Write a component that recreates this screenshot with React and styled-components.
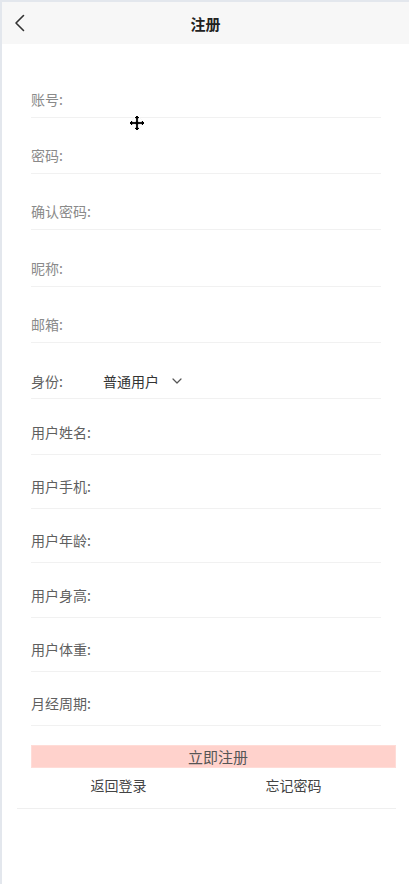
import styled, { createGlobalStyle } from "styled-components";

const GlobalStyle = createGlobalStyle`
  body {
    margin: 0;
    background: #ffffff;
    font-family: "Noto Sans CJK SC", "Noto Sans", "Liberation Sans", sans-serif;
  }
  * {
    box-sizing: border-box;
  }
`;

const Page = styled.div`
  position: relative;
  min-height: 884px;
  border-left: 2px solid #e3e7ed;
  border-top: 2px solid #e3e7ed;
  background: #ffffff;
`;

const Header = styled.header`
  display: grid;
  grid-template-columns: 1fr auto 1fr;
  align-items: center;
  height: 42px;
  background: #f7f7f7;
`;

const BackButton = styled.button`
  justify-self: start;
  display: flex;
  align-items: center;
  margin-left: 12px;
  padding: 0;
  border: none;
  background: transparent;
  cursor: pointer;
`;

const Title = styled.h1`
  margin: 0;
  font-size: 15px;
  font-weight: 700;
  color: #222;
`;

const Form = styled.form`
  display: flex;
  flex-direction: column;
  padding: 18px 0 0 29px;
`;

const Row = styled.label`
  display: flex;
  align-items: flex-end;
  width: 350px;
  height: ${(p) => p.$h}px;
  padding-bottom: ${(p) => p.$pb}px;
  border-bottom: 1px solid #f1f1f1;
`;

const RowLabel = styled.span`
  min-width: ${(p) => (p.$wide ? "72px" : "auto")};
  font-size: 14px;
  line-height: 16px;
  color: ${(p) => (p.$muted ? "#8a8a8a" : "#5f5f5f")};
`;

const SelectValue = styled.span`
  display: flex;
  align-items: center;
  gap: 13px;
  font-size: 14px;
  line-height: 16px;
  color: #333;
`;

const SubmitButton = styled.button`
  width: 365px;
  height: 23px;
  margin-top: 19px;
  padding: 0 0 0 9px;
  border: 1px solid #ffdcd7;
  background: #ffd2cc;
  font-family: inherit;
  font-size: 15px;
  line-height: 21px;
  color: #555;
  cursor: pointer;
`;

const Links = styled.div`
  display: flex;
  width: 350px;
  padding-top: 9px;
`;

const LinkItem = styled.a`
  flex: 1;
  text-align: center;
  font-size: 14px;
  line-height: 16px;
  color: #444;
  text-decoration: none;
  cursor: pointer;
`;

const Divider = styled.hr`
  width: 379px;
  margin: 15px 0 0 -14px;
  border: none;
  border-top: 1px solid #efefef;
`;

const Cursor = styled.svg`
  position: absolute;
  left: 126px;
  top: 112px;
  pointer-events: none;
`;

const fields = [
  { label: "账号:", h: 56, pb: 10, muted: true },
  { label: "密码:", h: 56, pb: 10, muted: true },
  { label: "确认密码:", h: 56, pb: 10, muted: true },
  { label: "昵称:", h: 57, pb: 10, muted: true },
  { label: "邮箱:", h: 56, pb: 10, muted: true },
  { label: "身份:", h: 56, pb: 9, select: "普通用户" },
  { label: "用户姓名:", h: 56, pb: 14 },
  { label: "用户手机:", h: 54, pb: 14 },
  { label: "用户年龄:", h: 54, pb: 14 },
  { label: "用户身高:", h: 55, pb: 14 },
  { label: "用户体重:", h: 54, pb: 14 },
  { label: "月经周期:", h: 54, pb: 14 },
];

export default function App() {
  return (
    <>
      <GlobalStyle />
      <Page>
        <Header>
          <BackButton type="button" aria-label="返回">
            <svg width="11" height="18" viewBox="0 0 11 18" fill="none">
              <polyline
                points="9.5,1.5 2,9 9.5,16.5"
                stroke="#333"
                strokeWidth="1.6"
                strokeLinecap="round"
                strokeLinejoin="round"
              />
            </svg>
          </BackButton>
          <Title>注册</Title>
          <span />
        </Header>

        <Form onSubmit={(e) => e.preventDefault()}>
          {fields.map((f) => (
            <Row key={f.label} $h={f.h} $pb={f.pb}>
              <RowLabel $muted={f.muted} $wide={!!f.select}>
                {f.label}
              </RowLabel>
              {f.select && (
                <SelectValue>
                  {f.select}
                  <svg width="10" height="6" viewBox="0 0 10 6" fill="none">
                    <polyline
                      points="1,1 5,5 9,1"
                      stroke="#555"
                      strokeWidth="1.2"
                      strokeLinecap="round"
                      strokeLinejoin="round"
                    />
                  </svg>
                </SelectValue>
              )}
            </Row>
          ))}

          <SubmitButton type="submit">立即注册</SubmitButton>
          <Links>
            <LinkItem>返回登录</LinkItem>
            <LinkItem>忘记密码</LinkItem>
          </Links>
          <Divider />
        </Form>

        <Cursor width="18" height="18" viewBox="-1 -1 18 18">
          <path
            d="M8 0 L11.5 3.5 H9.4 V6.6 H12.5 V4.5 L16 8 L12.5 11.5 V9.4 H9.4 V12.5 H11.5 L8 16 L4.5 12.5 H6.6 V9.4 H3.5 V11.5 L0 8 L3.5 4.5 V6.6 H6.6 V3.5 H4.5 Z"
            fill="#000"
            stroke="#fff"
            strokeWidth="1"
          />
        </Cursor>
      </Page>
    </>
  );
}
